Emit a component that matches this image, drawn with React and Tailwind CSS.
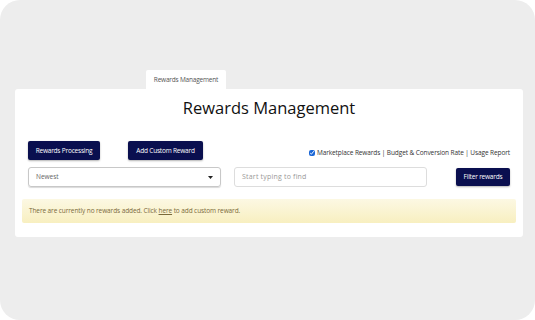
export default function App() {
  const f = { fontFamily: '"Open Sans", "Noto Sans", sans-serif' };
  return (
    <div className="w-[535px] h-[320px] bg-white" style={f}>
      <div className="w-full h-full rounded-[20px] bg-[#ededed] pt-[70px] px-[15px]">
        <div className="flex pl-[131px]">
          <div className="w-[80px] h-[19px] bg-white rounded-t-[2px] flex items-center justify-center text-[6.5px] text-[#555] tracking-[-0.2px]">
            Rewards Management
          </div>
        </div>
        <div className="w-[508px] h-[148px] bg-white rounded-[3px] px-[13px] pt-[6px]">
          <div className="text-center text-[16.5px] leading-[26px] text-[#111]">Rewards Management</div>
          <div className="flex items-end justify-between mt-[20px]">
            <div className="flex gap-[28px]">
              <button className="h-[19px] w-[72px] bg-[#0a0f4f] text-white text-[6.5px] rounded-[2px] shadow-[0_1px_2px_rgba(0,0,0,0.3)] tracking-[-0.2px]">Rewards Processing</button>
              <button className="h-[19px] w-[75px] bg-[#0a0f4f] text-white text-[6.5px] rounded-[2px] shadow-[0_1px_2px_rgba(0,0,0,0.3)] tracking-[-0.2px]">Add Custom Reward</button>
            </div>
            <div className="flex items-center gap-[2px] text-[6.5px] text-[#333] tracking-[-0.1px] mb-[2px]">
              <input type="checkbox" defaultChecked className="w-[6px] h-[6px] m-0 accent-[#1a66d6]" />
              <span>Marketplace Rewards | Budget &amp; Conversion Rate | Usage Report</span>
            </div>
          </div>
          <div className="flex items-center mt-[7px]">
            <div className="w-[193px] h-[20px] border border-[#c8c8c8] rounded-[3px] flex items-center justify-between px-[7px] shadow-[0_1px_1px_rgba(0,0,0,0.15)]">
              <span className="text-[6.5px] text-[#666]">Newest</span>
              <svg width="5" height="3" viewBox="0 0 5 3"><path d="M0 0h5L2.5 3z" fill="#222" /></svg>
            </div>
            <div className="ml-[13px] w-[193px] h-[20px] border border-[#ddd] rounded-[3px] flex items-center px-[7px]">
              <span className="text-[7px] text-[#999] tracking-[0.2px]">Start typing to find</span>
            </div>
            <button className="ml-auto h-[18px] w-[54px] bg-[#0a0f4f] text-white text-[6.5px] rounded-[2px] shadow-[0_1px_2px_rgba(0,0,0,0.3)] tracking-[-0.2px]">Filter rewards</button>
          </div>
          <div className="-mx-[6px] mt-[12px] h-[24px] rounded-[2px] bg-gradient-to-b from-[#fcf8e3] to-[#f8efc0] flex items-center px-[7px] text-[6.5px] text-[#7a6a3a] tracking-[-0.1px]">
            <span>There are currently no rewards added. Click <span className="underline">here</span> to add custom reward.</span>
          </div>
        </div>
      </div>
    </div>
  );
}
